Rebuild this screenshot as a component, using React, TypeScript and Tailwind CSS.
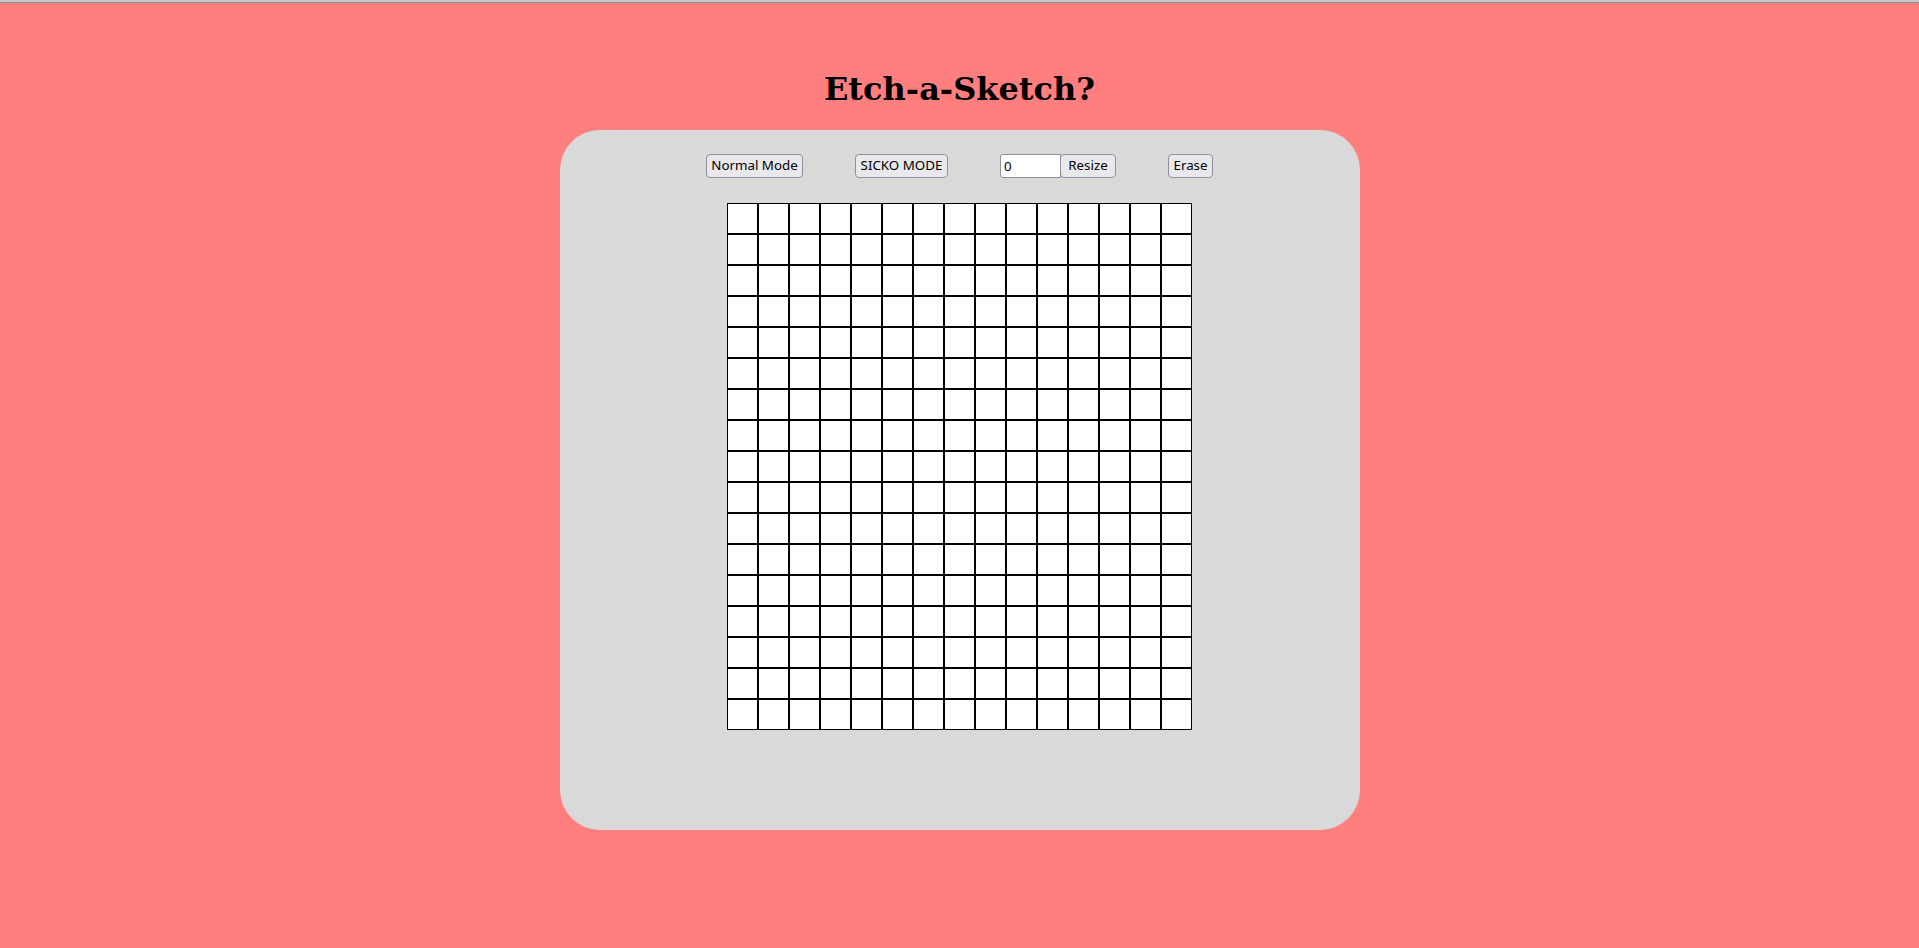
const COLS = 15
const ROWS = 17

function Btn({ label, className = '' }: { label: string; className?: string }) {
  return (
    <button
      type="button"
      className={`h-6 bg-[#e9e9ed] border border-[#8f8f9d] rounded-[4px] text-[13.33px] leading-none text-black font-['Noto_Sans',sans-serif] flex items-center justify-center hover:bg-[#d0d0d7] ${className}`}
    >
      {label}
    </button>
  )
}

export default function App() {
  const cells = Array.from({ length: COLS * ROWS })

  return (
    <div className="min-h-[948px] bg-[#ff7f7f] flex flex-col items-center">
      <div className="w-full h-[2px] bg-[#c6c6c6]" />
      <div className="w-full h-px bg-[#8c8c8c]" />

      <h1 className="mt-[68px] mb-[22px] text-[32px] leading-[37px] font-bold text-black font-['DejaVu_Serif',serif]">
        Etch-a-Sketch?
      </h1>

      <div className="w-[800px] h-[700px] bg-[#d9d9d9] rounded-[40px] flex flex-col items-center pt-6">
        <div className="w-full flex justify-center gap-[52px]">
          <Btn label="Normal Mode" className="w-[97px]" />
          <Btn label="SICKO MODE" className="w-[93px]" />
          <div className="flex">
            <input
              type="text"
              defaultValue="0"
              className="w-[61px] h-6 bg-white border border-[#8f8f9d] rounded-l-[3px] px-[3px] text-[13.33px] text-black font-['Noto_Sans',sans-serif] outline-none"
            />
            <Btn label="Resize" className="w-[56px] -ml-px" />
          </div>
          <Btn label="Erase" className="w-[45px]" />
        </div>

        <div className="mt-[25px] w-[465px] flex flex-wrap">
          {cells.map((_, i) => (
            <div key={i} className="w-[31px] h-[31px] border border-black bg-white" />
          ))}
        </div>
      </div>
    </div>
  )
}
